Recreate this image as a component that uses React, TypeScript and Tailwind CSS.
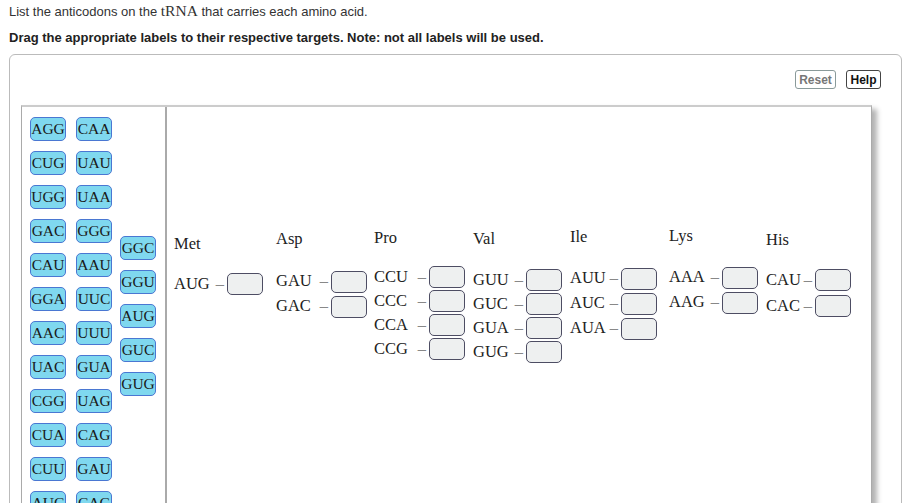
const COL1 = ['AGG', 'CUG', 'UGG', 'GAC', 'CAU', 'GGA', 'AAC', 'UAC', 'CGG', 'CUA', 'CUU', 'AUC']
const COL2 = ['CAA', 'UAU', 'UAA', 'GGG', 'AAU', 'UUC', 'UUU', 'GUA', 'UAG', 'CAG', 'GAU', 'CAC']
const COL3 = ['GGC', 'GGU', 'AUG', 'GUC', 'GUG']

interface Group {
  name: string
  pos: string
  rowsMt: string
  labelW: string
  rowH: string
  codons: string[]
}

const GROUPS: Group[] = [
  { name: 'Met', pos: 'left-[7px] top-[128px]', rowsMt: 'mt-[19px]', labelW: 'w-[53px]', rowH: 'h-[24px]', codons: ['AUG'] },
  { name: 'Asp', pos: 'left-[109px] top-[123px]', rowsMt: 'mt-[21px]', labelW: 'w-[55px]', rowH: 'h-[25px]', codons: ['GAU', 'GAC'] },
  { name: 'Pro', pos: 'left-[207px] top-[122px]', rowsMt: 'mt-[18px]', labelW: 'w-[55px]', rowH: 'h-[24px]', codons: ['CCU', 'CCC', 'CCA', 'CCG'] },
  { name: 'Val', pos: 'left-[306px] top-[123px]', rowsMt: 'mt-[20px]', labelW: 'w-[53px]', rowH: 'h-[24px]', codons: ['GUU', 'GUC', 'GUA', 'GUG'] },
  { name: 'Ile', pos: 'left-[403px] top-[121px]', rowsMt: 'mt-[20px]', labelW: 'w-[51px]', rowH: 'h-[25px]', codons: ['AUU', 'AUC', 'AUA'] },
  { name: 'Lys', pos: 'left-[502px] top-[120px]', rowsMt: 'mt-[20px]', labelW: 'w-[53px]', rowH: 'h-[25px]', codons: ['AAA', 'AAG'] },
  { name: 'His', pos: 'left-[599px] top-[124px]', rowsMt: 'mt-[18px]', labelW: 'w-[49px]', rowH: 'h-[26px]', codons: ['CAU', 'CAC'] },
]

function Chip({ text }: { text: string }) {
  return (
    <div className="w-[36px] h-[24px] shrink-0 flex items-center justify-center rounded-[5px] border-[1.5px] border-[#4a77d2] bg-[#7fd8ef] font-['Liberation_Serif',serif] text-[15.5px] text-[#1a1a1a] leading-none">
      {text}
    </div>
  )
}

function Target() {
  return <div className="w-[36px] h-[22px] shrink-0 rounded-[5px] border-[1.5px] border-[#4d4d63] bg-[#eef0f0]" />
}

export default function App() {
  return (
    <div className="w-[907px] h-[503px] overflow-hidden bg-white font-['Liberation_Sans',Arial,sans-serif] text-[13px] text-[#333]">
      <div className="px-[9px] pt-[3px]">
        <p className="leading-[16px]">
          List the anticodons on the{' '}
          <span className="font-['Liberation_Serif',serif] text-[15.5px]">tRNA</span> that carries each amino acid.
        </p>
        <p className="mt-[10px] leading-[16px] font-bold text-[#222]">
          Drag the appropriate labels to their respective targets. Note: not all labels will be used.
        </p>
      </div>

      <div className="ml-[9px] mt-[8px] w-[893px] h-[480px] rounded-[6px] border border-[#bbb] pl-[11px] pt-[15px]">
        <div className="flex justify-end gap-[10px] pr-[20px]">
          <button className="h-[19px] w-[41px] rounded-[3px] border border-[#8a9a9a] bg-white text-[12px] font-bold text-[#777] leading-none">
            Reset
          </button>
          <button className="h-[19px] w-[35px] rounded-[3px] border border-[#444] bg-white text-[12px] font-bold text-[#111] leading-none">
            Help
          </button>
        </div>

        <div className="mt-[16px] w-[851px] h-[420px] flex border border-[#aaa] border-t-2 border-t-[#ccc] bg-white shadow-[5px_4px_5px_rgba(0,0,0,0.3)]">
          <div className="w-[145px] shrink-0 border-r-2 border-[#aaa] pl-[8px] pt-[10px] flex gap-[10px]">
            <div className="flex flex-col gap-[10px]">
              {COL1.map((c) => (
                <Chip key={c} text={c} />
              ))}
            </div>
            <div className="flex flex-col gap-[10px]">
              {COL2.map((c) => (
                <Chip key={c} text={c} />
              ))}
            </div>
            <div className="flex flex-col gap-[10px] mt-[119px] -ml-[2px]">
              {COL3.map((c) => (
                <Chip key={c} text={c} />
              ))}
            </div>
          </div>

          <div className="relative flex-1 font-['Liberation_Serif',serif] text-[16.5px] text-[#222]">
            {GROUPS.map((g) => (
              <div key={g.name} className={`absolute ${g.pos} flex flex-col`}>
                <div className="leading-[18px]">{g.name}</div>
                <div className={`${g.rowsMt} flex flex-col`}>
                  {g.codons.map((c) => (
                    <div key={c} className={`${g.rowH} flex items-center`}>
                      <span className={`${g.labelW} flex items-center justify-between pr-[3px] leading-none`}>
                        {c}
                        <span className="text-[#888]">–</span>
                      </span>
                      <Target />
                    </div>
                  ))}
                </div>
              </div>
            ))}
          </div>
        </div>
      </div>
    </div>
  )
}
